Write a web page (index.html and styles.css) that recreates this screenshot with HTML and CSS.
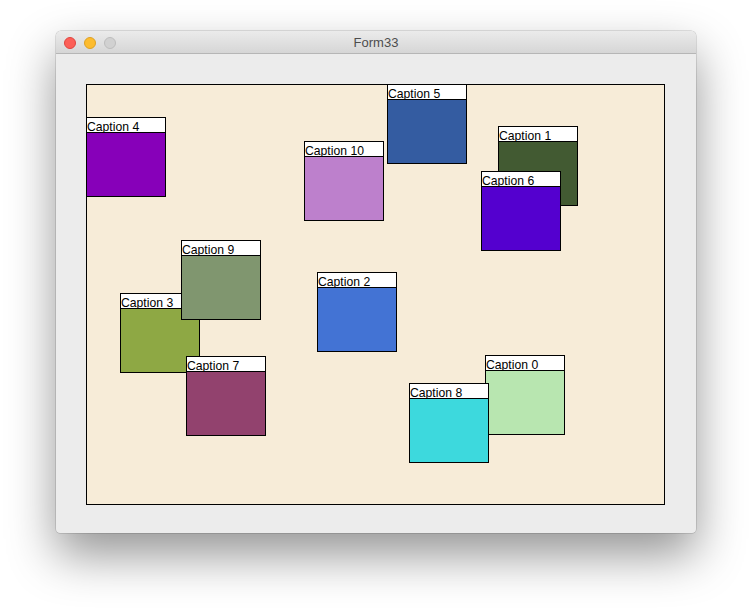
FILE: index.html
```html
<!DOCTYPE html>
<html>
<head>
<meta charset="utf-8">
<link rel="stylesheet" href="styles.css">
</head>
<body>
<div class="window">
  <div class="titlebar">
    <div class="lights">
      <span class="light close"></span>
      <span class="light min"></span>
      <span class="light zoom"></span>
    </div>
    <div class="title">Form33</div>
    <div></div>
  </div>
  <div class="content">
    <div class="canvas">
      <div class="node" style="left:398px;top:270px;background:#b8e6b0"><div class="caption">Caption 0</div></div>
      <div class="node" style="left:411px;top:41px;background:#425a32"><div class="caption">Caption 1</div></div>
      <div class="node" style="left:230px;top:187px;background:#4373d4"><div class="caption">Caption 2</div></div>
      <div class="node" style="left:33px;top:208px;background:#8ea844"><div class="caption">Caption 3</div></div>
      <div class="node" style="left:-1px;top:32px;background:#8700b9"><div class="caption">Caption 4</div></div>
      <div class="node" style="left:300px;top:-1px;background:#345ca1"><div class="caption">Caption 5</div></div>
      <div class="node" style="left:394px;top:86px;background:#5400cf"><div class="caption">Caption 6</div></div>
      <div class="node" style="left:99px;top:271px;background:#92426e"><div class="caption">Caption 7</div></div>
      <div class="node" style="left:322px;top:298px;background:#3dd9dd"><div class="caption">Caption 8</div></div>
      <div class="node" style="left:94px;top:155px;background:#80966f"><div class="caption">Caption 9</div></div>
      <div class="node" style="left:217px;top:56px;background:#bd80cc"><div class="caption">Caption 10</div></div>
    </div>
  </div>
</div>
</body>
</html>
```
FILE: styles.css
```css
html, body {
  margin: 0;
  padding: 0;
  background: #ffffff;
}
body {
  width: 752px;
  height: 614px;
  overflow: hidden;
  font-family: "Liberation Sans", Arial, sans-serif;
}
.window {
  margin-left: 56px;
  margin-top: 31px;
  width: 640px;
  height: 502px;
  background: #ececec;
  border-radius: 5px 5px 4px 4px;
  box-shadow: 0 0 0 0.5px rgba(0,0,0,0.22), 0 22px 48px rgba(0,0,0,0.42);
  display: flex;
  flex-direction: column;
  overflow: hidden;
}
.titlebar {
  height: 22px;
  border-bottom: 1px solid #b6b6b6;
  background: linear-gradient(#ebebeb, #d6d6d6);
  display: grid;
  grid-template-columns: 1fr auto 1fr;
  align-items: center;
  flex: none;
}
.lights {
  display: flex;
  gap: 8px;
  padding-left: 8px;
  align-items: center;
}
.light {
  width: 12px;
  height: 12px;
  border-radius: 50%;
  box-sizing: border-box;
  display: block;
}
.close {
  background: #fc5f57;
  border: 0.5px solid #e0443e;
}
.min {
  background: #fdbc2e;
  border: 0.5px solid #dea123;
}
.zoom {
  background: #d1d1d1;
  border: 0.5px solid #bdbdbd;
}
.title {
  font-size: 13px;
  color: #4d4d4d;
  line-height: 24px;
}
.content {
  flex: 1;
  padding: 30px;
}
.canvas {
  position: relative;
  width: 579px;
  height: 421px;
  box-sizing: border-box;
  border: 1px solid #000000;
  background: #f7ecd8;
}
.node {
  position: absolute;
  width: 80px;
  height: 80px;
  box-sizing: border-box;
  border: 1px solid #000000;
}
.caption {
  height: 14px;
  background: #ffffff;
  border-bottom: 1px solid #000000;
  font-size: 12.2px;
  line-height: 18px;
  color: #000000;
  white-space: nowrap;
  overflow: hidden;
}
```
